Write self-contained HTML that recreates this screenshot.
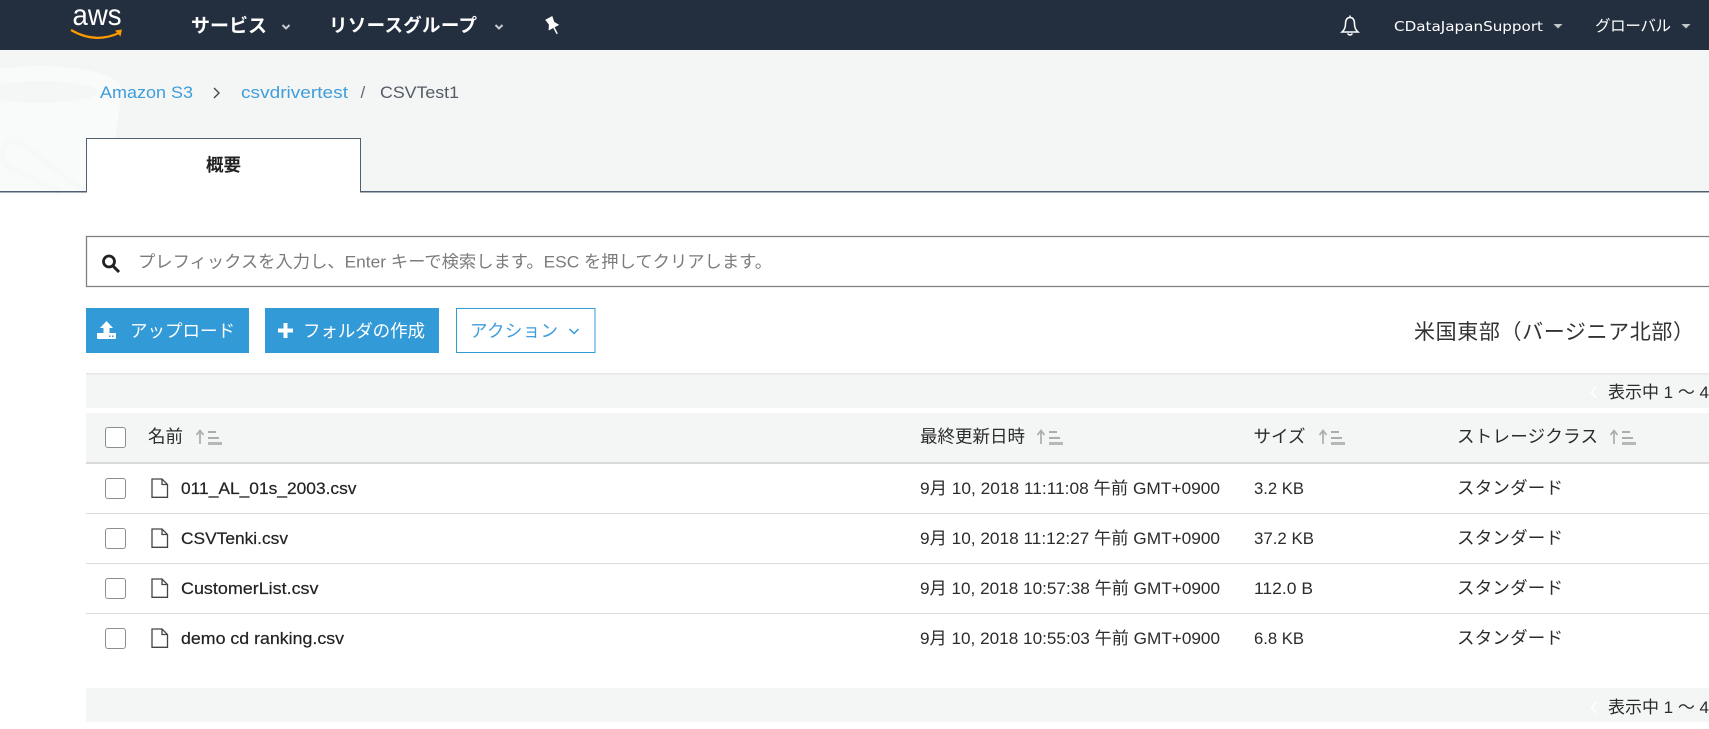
<!DOCTYPE html>
<html lang="ja"><head><meta charset="utf-8"><title>Amazon S3</title>
<style>
html,body{margin:0;padding:0;width:1709px;height:729px;overflow:hidden;background:#fff}
svg{display:block}
text{font-family:"Liberation Sans","Noto Sans CJK JP",sans-serif;fill:#2b2b2b;font-size:17px}
.j{font-size:17.500px}
.l{fill:#3f9ddb}
.w{fill:#fff}
.n{fill:#222;stroke:#222;stroke-width:.2px}
</style></head><body>
<svg width="1709" height="729" viewBox="0 0 1709 729" xmlns="http://www.w3.org/2000/svg">
<defs>
<g id="sort"><path d="M4 15V2M0.500 6L4 1.500L7.500 6" fill="none" stroke="#a9adad" stroke-width="1.700"/><rect x="12" y="2" width="8" height="2" fill="#a9adad"/><rect x="12" y="8" width="11" height="2" fill="#a9adad"/><rect x="12" y="13" width="14" height="3" fill="#b5b8b8"/></g>
<g id="file"><path d="M1 1H11L16.500 6.500V19.300H1Z" fill="#fff" stroke="#444" stroke-width="1.300"/><path d="M11 1V6.500H16.500" fill="none" stroke="#444" stroke-width="1.300"/></g>
<rect id="cb" width="20" height="20" rx="2.500" fill="#fff" stroke="#8a8f8f" stroke-width="1"/>
</defs>

<rect x="0" y="50" width="1709" height="142" fill="#f4f6f5"/>
<ellipse cx="40" cy="90" rx="82" ry="24" fill="#f9fbfa"/>
<path d="M0 90H122L108 192H0Z" fill="#f9fbfa"/>
<ellipse cx="40" cy="92" rx="58" ry="11" fill="#f5f7f6"/>
<path d="M85 192L30 150Q15 135 5 145Q-3 158 10 168L60 192" fill="none" stroke="#f7f9f8" stroke-width="6"/>
<rect x="0" y="191" width="1709" height="1.500" fill="#4f6070"/>

<rect x="0" y="0" width="1709" height="50" fill="#232f3e"/>
<text class="w" x="72.500" y="25" style="font-size:30px" textLength="49" lengthAdjust="spacingAndGlyphs">aws</text>
<path d="M71 30Q95 44 119 33" fill="none" stroke="#f90" stroke-width="2.200"/>
<path d="M115 30.500L122 29.500L120.500 36.500Z" fill="#f90"/>
<text class="w" x="191" y="32" style="font-size:19px;font-weight:700" textLength="76">サービス</text>
<path d="M282.500 25L286 28.500L289.500 25" fill="none" stroke="#c8ccd0" stroke-width="2"/>
<text class="w" x="329" y="32" style="font-size:18.500px;font-weight:700" textLength="148">リソースグループ</text>
<path d="M495.500 25L499 28.500L502.500 25" fill="none" stroke="#c8ccd0" stroke-width="2"/>
<g transform="translate(552.500 25) rotate(-28)"><path d="M-4 -8H4L3 -2L6 3H-6L-3 -2Z" fill="#fff"/><path d="M0 3V10" stroke="#fff" stroke-width="1.500"/></g>
<path d="M1342 32Q1345.500 29 1345.500 24C1345.500 20 1347 17.500 1350 17.500C1353 17.500 1354.500 20 1354.500 24Q1354.500 29 1358 32Z" fill="none" stroke="#fff" stroke-width="1.500"/>
<path d="M1350 17.500V15.500M1347.500 33.500Q1350 36.500 1352.500 33.500" fill="none" stroke="#fff" stroke-width="1.500"/>
<text class="w" x="1394" y="31" style="font-family:'DejaVu Sans',sans-serif;font-size:13px" textLength="149" lengthAdjust="spacingAndGlyphs">CDataJapanSupport</text>
<path d="M1553.500 24H1562.500L1558 28.500Z" fill="#c4c7ca"/>
<text class="w" x="1595" y="31" style="font-size:15.500px" textLength="76">グローバル</text>
<path d="M1681.500 24H1690.500L1686 28.500Z" fill="#c4c7ca"/>

<text class="l" x="100" y="98" textLength="93" lengthAdjust="spacingAndGlyphs">Amazon S3</text>
<path d="M214 88L219 93L214 98" fill="none" stroke="#444" stroke-width="1.400"/>
<text class="l" x="241" y="98" textLength="107" lengthAdjust="spacingAndGlyphs">csvdrivertest</text>
<text x="360.500" y="98" style="fill:#5d6b78">/</text>
<text x="380" y="98" style="fill:#545b64" textLength="79" lengthAdjust="spacingAndGlyphs">CSVTest1</text>

<path d="M86.500 192V138.500H360.500V192" fill="#fff" stroke="#4f6070" stroke-width="1"/>
<rect x="87" y="190" width="273" height="3" fill="#fff"/>
<text x="206" y="171" style="font-size:17.500px;font-weight:700;fill:#222" textLength="35">概要</text>

<path d="M1710 236.500H86.500V286.500H1710" fill="#fff" stroke="#7f7f7f" stroke-width="1.300"/>
<circle cx="109" cy="261.500" r="5.500" fill="none" stroke="#222" stroke-width="2.800"/>
<path d="M113 266L119 272" stroke="#222" stroke-width="3"/>
<text x="138" y="267.500" style="font-size:17px;fill:#7b7b7b" textLength="634" lengthAdjust="spacingAndGlyphs">プレフィックスを入力し、Enter キーで検索します。ESC を押してクリアします。</text>

<rect x="86" y="308" width="163" height="45" fill="#339ad8"/>
<path d="M106.500 321L113 328H109.500V333H103.500V328H100Z" fill="#fff"/>
<path d="M97 333H116V338Q116 339 115 339H98Q97 339 97 338Z" fill="#fff"/>
<rect x="109" y="335.500" width="1.500" height="1.500" fill="#339ad8"/><rect x="112" y="335.500" width="1.500" height="1.500" fill="#339ad8"/>
<text class="w j" x="130" y="337" textLength="105">アップロード</text>
<rect x="265" y="308" width="174" height="45" fill="#339ad8"/>
<path d="M278 330.500H293M285.500 323V338" stroke="#fff" stroke-width="4"/>
<text class="w j" x="303" y="337" textLength="122">フォルダの作成</text>
<rect x="456.500" y="308.500" width="138.500" height="44" fill="#fff" stroke="#339ad8"/>
<text class="l j" x="470" y="337" textLength="88">アクション</text>
<path d="M569.500 329L574 333.500L578.500 329" fill="none" stroke="#339ad8" stroke-width="1.500"/>

<text x="1414" y="339" style="font-size:21px;fill:#333" textLength="280">米国東部（バージニア北部）</text>

<rect x="86" y="373" width="1623" height="35" fill="#f4f6f5"/>
<rect x="86" y="373" width="1623" height="1.500" fill="#e6e6e6"/>
<path d="M1596 387L1591.500 392.500L1596 398" fill="none" stroke="#fff" stroke-width="1.500"/>
<text x="1608" y="398" style="font-size:17px" textLength="101">表示中 1 ～ 4</text>

<rect x="86" y="413" width="1623" height="49" fill="#f4f6f5"/>
<rect x="86" y="462" width="1623" height="2" fill="#d9d9d9"/>
<use href="#cb" x="105.500" y="427.500"/>
<text class="j" x="148" y="442.500" textLength="35">名前</text>
<use href="#sort" x="196" y="429"/>
<text class="j" x="920" y="442.500" textLength="105">最終更新日時</text>
<use href="#sort" x="1037" y="429"/>
<text class="j" x="1253.500" y="442.500" textLength="52">サイズ</text>
<use href="#sort" x="1319" y="429"/>
<text class="j" x="1457" y="442.500" textLength="141">ストレージクラス</text>
<use href="#sort" x="1610" y="429"/>

<rect x="86" y="513" width="1623" height="1" fill="#dcdcdc"/>
<rect x="86" y="563" width="1623" height="1" fill="#dcdcdc"/>
<rect x="86" y="613" width="1623" height="1" fill="#dcdcdc"/>

<use href="#cb" x="105.500" y="478.500"/><use href="#file" x="151" y="478"/>
<text class="n" x="181" y="494" textLength="175.500" lengthAdjust="spacingAndGlyphs">011_AL_01s_2003.csv</text>
<text x="920" y="494" textLength="300" lengthAdjust="spacingAndGlyphs">9月 10, 2018 11:11:08 午前 GMT+0900</text>
<text x="1254" y="494" textLength="50" lengthAdjust="spacingAndGlyphs">3.2 KB</text>
<text class="j" x="1457" y="494" textLength="106">スタンダード</text>

<use href="#cb" x="105.500" y="528.500"/><use href="#file" x="151" y="528"/>
<text class="n" x="181" y="544" textLength="107" lengthAdjust="spacingAndGlyphs">CSVTenki.csv</text>
<text x="920" y="544" textLength="300" lengthAdjust="spacingAndGlyphs">9月 10, 2018 11:12:27 午前 GMT+0900</text>
<text x="1254" y="544" textLength="60" lengthAdjust="spacingAndGlyphs">37.2 KB</text>
<text class="j" x="1457" y="544" textLength="106">スタンダード</text>

<use href="#cb" x="105.500" y="578.500"/><use href="#file" x="151" y="578"/>
<text class="n" x="181" y="594" textLength="137.500" lengthAdjust="spacingAndGlyphs">CustomerList.csv</text>
<text x="920" y="594" textLength="300" lengthAdjust="spacingAndGlyphs">9月 10, 2018 10:57:38 午前 GMT+0900</text>
<text x="1254" y="594" textLength="59" lengthAdjust="spacingAndGlyphs">112.0 B</text>
<text class="j" x="1457" y="594" textLength="106">スタンダード</text>

<use href="#cb" x="105.500" y="628.500"/><use href="#file" x="151" y="628"/>
<text class="n" x="181" y="644" textLength="163" lengthAdjust="spacingAndGlyphs">demo cd ranking.csv</text>
<text x="920" y="644" textLength="300" lengthAdjust="spacingAndGlyphs">9月 10, 2018 10:55:03 午前 GMT+0900</text>
<text x="1254" y="644" textLength="50" lengthAdjust="spacingAndGlyphs">6.8 KB</text>
<text class="j" x="1457" y="644" textLength="106">スタンダード</text>

<rect x="86" y="688" width="1623" height="34" fill="#f4f6f5"/>
<path d="M1596 702L1591.500 707.500L1596 713" fill="none" stroke="#fff" stroke-width="1.500"/>
<text x="1608" y="713" style="font-size:17px" textLength="101">表示中 1 ～ 4</text>
</svg>
</body></html>
